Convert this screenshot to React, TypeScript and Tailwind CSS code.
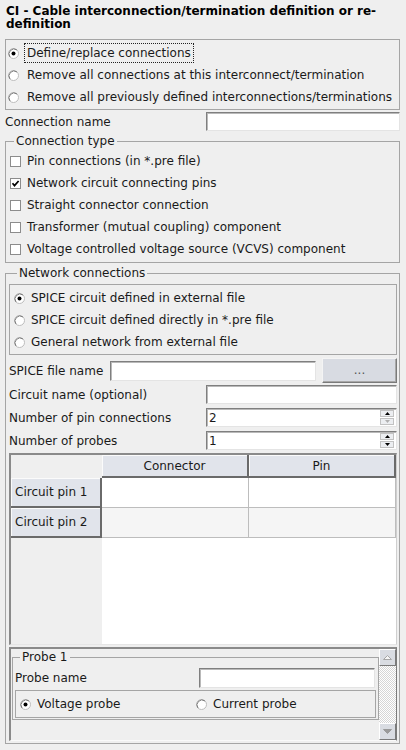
import React from "react";

const inputCls =
  "bg-white border border-t-[#7f7f7f] border-l-[#7f7f7f] border-r-[#e4e4e4] border-b-[#e4e4e4] shadow-[inset_1px_1px_0_#b9b9b9]";

function Radio({ checked }: { checked?: boolean }) {
  return (
    <svg width="11" height="11" viewBox="0 0 11 11" className="shrink-0">
      <circle cx="5.5" cy="5.5" r="5" fill="#fff" stroke="#bcbcbc" />
      <path d="M2 9 A5 5 0 0 1 9 2" fill="none" stroke="#7c7c7c" />
      {checked && <circle cx="5.5" cy="5.5" r="2" fill="#000" />}
    </svg>
  );
}

function Check({ checked }: { checked?: boolean }) {
  return (
    <svg width="11" height="11" viewBox="0 0 11 11" className="shrink-0">
      <rect x="0.5" y="0.5" width="10" height="10" fill="#fff" stroke="#8c8c8c" />
      {checked && <path d="M2.5 5.3 L4.5 7.6 L8.6 3" fill="none" stroke="#000" strokeWidth="1.7" />}
    </svg>
  );
}

function Group({ title, className, children }: { title: string; className: string; children: React.ReactNode }) {
  return (
    <fieldset className={"border border-[#a5a5a5] min-w-0 " + className}>
      <legend className="ml-[8px] px-[2px] leading-[14px]">{title}</legend>
      {children}
    </fieldset>
  );
}

function SpinArrow({ up, disabled }: { up?: boolean; disabled?: boolean }) {
  return (
    <div className="h-[7px] bg-[#eceef1] border border-[#c2c2c2] flex items-center justify-center">
      <svg width="5" height="3" viewBox="0 0 5 3">
        <path d={up ? "M0 3 L2.5 0 L5 3 Z" : "M0 0 L2.5 3 L5 0 Z"} fill={disabled ? "#b0b0b0" : "#000"} />
      </svg>
    </div>
  );
}

function Spin({ value, downDisabled }: { value: string; downDisabled?: boolean }) {
  return (
    <div className={inputCls + " w-[191px] h-[19px] flex items-center pl-[2px] pr-[2px]"}>
      <span className="flex-1 leading-[14px]">{value}</span>
      <div className="flex flex-col w-[14px] gap-[1px]">
        <SpinArrow up />
        <SpinArrow disabled={downDisabled} />
      </div>
    </div>
  );
}

function ScrollBtn({ up }: { up?: boolean }) {
  return (
    <div className="h-[17px] bg-[#d9dce2] border border-t-white border-l-white border-r-[#7a7a7a] border-b-[#7a7a7a] flex items-center justify-center">
      <svg width="9" height="5" viewBox="0 0 9 5">
        {up ? (
          <path d="M0.5 4.5 L4.5 0.5 L8.5 4.5 Z" fill="#f6f6f6" stroke="#a6a6a6" />
        ) : (
          <path d="M0.5 0.5 L4.5 4.5 L8.5 0.5 Z" fill="#9a9a9a" stroke="#9a9a9a" />
        )}
      </svg>
    </div>
  );
}

export default function App() {
  const types = [
    { label: "Pin connections (in *.pre file)", on: false },
    { label: "Network circuit connecting pins", on: true },
    { label: "Straight connector connection", on: false },
    { label: "Transformer (mutual coupling) component", on: false },
    { label: "Voltage controlled voltage source (VCVS) component", on: false },
  ];
  const nets = [
    { label: "SPICE circuit defined in external file", on: true },
    { label: "SPICE circuit defined directly in *.pre file", on: false },
    { label: "General network from external file", on: false },
  ];

  return (
    <div className="w-[406px] h-[750px] overflow-hidden bg-[#efefef] pl-[5px] pr-[6px] font-['DejaVu_Sans',sans-serif] text-[12px] text-[#1a1a1a]">
      <div className="pt-[5px] pl-[1px] font-bold leading-[13px] text-black">
        CI - Cable interconnection/termination definition or re-
        <br />
        definition
      </div>

      <div className="mt-[8px] border border-[#a5a5a5] pt-[2px] pb-[1px]">
        <div className="h-[22px] flex items-center pl-[2px]">
          <Radio checked />
          <span className="ml-[5px] px-[2px] h-[20px] leading-[18px] border border-dotted border-[#222]">
            Define/replace connections
          </span>
        </div>
        <div className="h-[22px] flex items-center pl-[2px]">
          <Radio />
          <span className="ml-[5px] px-[2px] h-[20px] leading-[18px] border border-transparent">
            Remove all connections at this interconnect/termination
          </span>
        </div>
        <div className="h-[22px] flex items-center pl-[2px]">
          <Radio />
          <span className="ml-[5px] px-[2px] h-[20px] leading-[18px] border border-transparent">
            Remove all previously defined interconnections/terminations
          </span>
        </div>
      </div>

      <div className="mt-[2px] h-[19px] flex items-center justify-between">
        <span>Connection name</span>
        <div className={inputCls + " w-[194px] h-[19px]"} />
      </div>

      <Group title="Connection type" className="mt-[3px] pt-[2px] pb-[2px]">
        {types.map((t) => (
          <div key={t.label} className="h-[22px] flex items-center pl-[4px] gap-[6px]">
            <Check checked={t.on} />
            <span>{t.label}</span>
          </div>
        ))}
      </Group>

      <Group title="Network connections" className="mt-[3px] pt-[4px] pb-[2px] pl-[3px] pr-[2px]">
        <div className="border border-[#a5a5a5] pt-[2px] pb-[1px]">
          {nets.map((n) => (
            <div key={n.label} className="h-[22px] flex items-center pl-[4px] gap-[6px]">
              <Radio checked={n.on} />
              <span>{n.label}</span>
            </div>
          ))}
        </div>

        <div className="mt-[3px] h-[25px] flex items-center">
          <span className="w-[101px]">SPICE file name</span>
          <div className={inputCls + " w-[206px] h-[20px]"} />
          <div className="ml-[6px] w-[75px] h-[25px] bg-[#d8dbe2] border border-t-[#f4f4f4] border-l-[#f4f4f4] border-r-[#7a7a7a] border-b-[#7a7a7a] shadow-[inset_-1px_-1px_0_#a8a8a8] flex items-center justify-center text-[#555] leading-[12px] pb-[2px]">
            ...
          </div>
        </div>

        <div className="mt-[2px] h-[19px] flex items-center justify-between">
          <span>Circuit name (optional)</span>
          <div className={inputCls + " w-[191px] h-[19px]"} />
        </div>
        <div className="mt-[4px] h-[19px] flex items-center justify-between">
          <span>Number of pin connections</span>
          <Spin value="2" downDisabled />
        </div>
        <div className="mt-[4px] h-[19px] flex items-center justify-between">
          <span>Number of probes</span>
          <Spin value="1" />
        </div>

        <div className="mt-[3px] h-[192px] flex flex-col border border-t-2 border-l-2 border-t-[#8a8a8a] border-l-[#8a8a8a] border-r-[#cfcfcf] border-b-[#e6e6e6]">
          <div className="flex h-[23px] shrink-0">
            <div className="w-[91px] bg-[#efefef]" />
            <div className="flex-1 bg-[#e1e4eb] border-r-2 border-b-2 border-[#6a6a6a] shadow-[inset_1px_1px_0_#fbfbfb] flex items-center justify-center">
              Connector
            </div>
            <div className="flex-1 bg-[#e1e4eb] border-r-2 border-b-2 border-[#6a6a6a] shadow-[inset_1px_1px_0_#fbfbfb] flex items-center justify-center">
              Pin
            </div>
          </div>
          {["Circuit pin 1", "Circuit pin 2"].map((p, i) => (
            <div key={p} className="flex h-[30px] shrink-0">
              <div className="w-[91px] bg-[#e1e4eb] border-r-2 border-b-2 border-[#6a6a6a] shadow-[inset_1px_1px_0_#fbfbfb] flex items-center pl-[4px]">
                {p}
              </div>
              <div className={(i === 0 ? "bg-white" : "bg-[#f5f5f5]") + " flex-1 border-r border-b border-[#bdbdbd]"} />
              <div className={(i === 0 ? "bg-white" : "bg-[#f5f5f5]") + " flex-1 border-r border-b border-[#bdbdbd]"} />
            </div>
          ))}
          <div className="flex flex-1">
            <div className="w-[91px] bg-[#efefef]" />
            <div className="flex-1 bg-white" />
          </div>
        </div>

        <div className="mt-[2px] h-[94px] flex border border-t-2 border-l-2 border-t-[#8a8a8a] border-l-[#8a8a8a] border-r-[#7a7a7a] border-b-[#fafafa]">
          <div className="flex-1 pt-[1px] pl-[1px]">
            <fieldset className="border border-[#a5a5a5] min-w-0 pt-[4px] pb-[1px]">
              <legend className="ml-[7px] px-[2px] leading-[14px]">Probe 1</legend>
              <div className="h-[20px] flex items-center justify-between pl-[2px] pr-[3px]">
                <span>Probe name</span>
                <div className={inputCls + " w-[176px] h-[20px]"} />
              </div>
              <div className="mt-[2px] mx-[2px] h-[28px] border border-[#a5a5a5] flex items-center pl-[4px]">
                <div className="w-[176px] flex items-center gap-[6px]">
                  <Radio checked />
                  <span>Voltage probe</span>
                </div>
                <div className="flex items-center gap-[6px]">
                  <Radio />
                  <span>Current probe</span>
                </div>
              </div>
            </fieldset>
          </div>
          <div className="w-[17px] flex flex-col">
            <ScrollBtn up />
            <div className="flex-1 [background-image:repeating-conic-gradient(#d6d6d6_0_25%,#ffffff_0_50%)] [background-size:2px_2px]" />
            <ScrollBtn />
          </div>
        </div>
      </Group>
    </div>
  );
}
